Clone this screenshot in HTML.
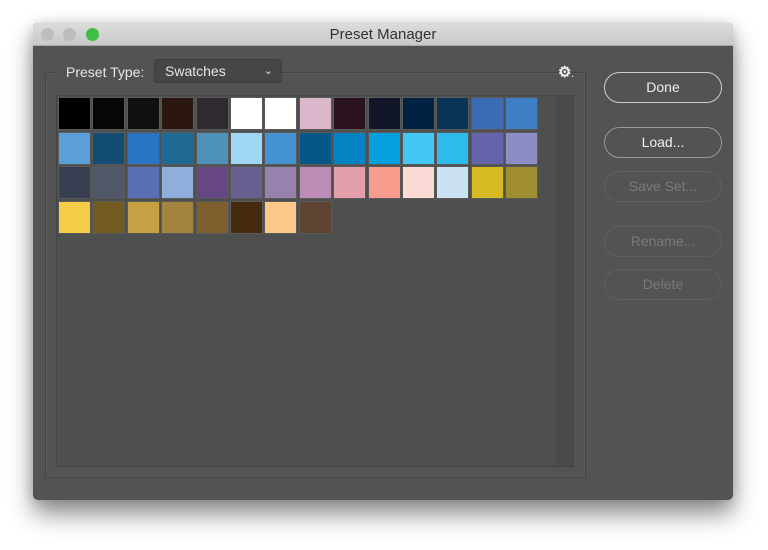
<!DOCTYPE html>
<html><head><style>
*{box-sizing:border-box;margin:0;padding:0}
body{width:768px;height:550px;background:#fff;position:relative;overflow:hidden;font-family:"Liberation Sans",sans-serif}
.win{position:absolute;left:33px;top:23px;width:700px;height:477px;background:#535353;border-radius:5px;box-shadow:0 14px 24px rgba(0,0,0,.45),0 0 12px rgba(0,0,0,.15);overflow:hidden}
.tb{position:absolute;left:0;top:0;width:700px;height:23px;background:linear-gradient(#dcdcdc,#c8c8c8);border-bottom:1px solid #a8a8a8;text-align:center;font-size:15px;line-height:23px;color:#333}
.dot{position:absolute;top:5px;width:13px;height:13px;border-radius:50%;background:#bdbdbd}
.grp{position:absolute;left:12px;top:49px;width:541px;height:406px;border:1px solid #444;box-shadow:inset 0 0 0 1px #5a5a5a}
.lbl{position:absolute;left:25px;top:40px;background:#535353;padding:0 8px;color:#e6e6e6;font-size:14px;line-height:18px}
.sel{position:absolute;left:121px;top:36px;width:128px;height:24px;background:#464646;border:1px solid #3e3e3e;border-radius:3px;color:#e6e6e6;font-size:14px;line-height:22px;padding-left:10px}
.list{position:absolute;left:23px;top:72px;width:518px;height:372px;background:#4e504f;border:1px solid #444}
.sb{position:absolute;right:0;top:0;width:17px;height:100%;background:#4a4a4a}
.sw{position:absolute;width:33px;height:33px;border:1px solid #5a5a5a}
.btn{position:absolute;left:571px;width:118px;height:31px;border-radius:16px;border:1.5px solid #aaa;color:#eee;font-size:14px;text-align:center;line-height:28px}
.dis{border:1px solid #5f5f5f;color:#7a7a7a}
</style></head><body>
<div class="win">
<div class="tb">Preset Manager
<div class="dot" style="left:8px"></div><div class="dot" style="left:30px"></div><div class="dot" style="left:53px;background:#3fbd46"></div></div>
<div class="grp"></div>
<div class="lbl">Preset Type:</div>
<div class="sel">Swatches<span style="position:absolute;right:8px;top:0;font-size:11px">&#8964;</span></div>
<div style="position:absolute;left:525px;top:40px;color:#eee;font-size:15px;font-weight:bold">&#9881;<span style="font-size:8px">.</span></div>
<div class="list"><div class="sb"></div><div id="g"></div></div>
<div class="btn" style="top:49px;border-color:#ccc">Done</div>
<div class="btn" style="top:104px;border-color:#999">Load...</div>
<div class="btn dis" style="top:148px">Save Set...</div>
<div class="btn dis" style="top:203px">Rename...</div>
<div class="btn dis" style="top:246px">Delete</div>
</div>
<script>
var c=["#000","#060606","#101010","#2c1710","#2e2a2f","#fff","#fff","#dab7ca","#2a1221","#111628","#012240","#0a3455","#3c6cb4","#3f7ec4",
"#5b9fd9","#144d74","#2875c2","#1e6a94","#4e92b8","#9fd6f4","#4593d2","#045687","#0582c1","#06a1dc","#44c7f4","#2ebcec","#6463ac","#8d8dc6",
"#393f52","#4f5769","#5b6fb6","#8eaedc","#664683","#686091","#9881ac","#bc8cb6","#e49daa","#f79b8c","#f9dad4","#cbe2f4","#d6b923","#a08d2f",
"#f5cc46","#735a1f","#c6a042","#a3843e","#7f5e2d","#472b0e","#fcc98b","#5d4330"];
var h="";c.forEach(function(x,i){var r=Math.floor(i/14),k=i%14;h+='<div class="sw" style="left:'+(1+k*34.4)+'px;top:'+(1+r*34.6)+'px;background:'+x+'"></div>';});
document.getElementById("g").innerHTML=h;
</script>
</body></html>
